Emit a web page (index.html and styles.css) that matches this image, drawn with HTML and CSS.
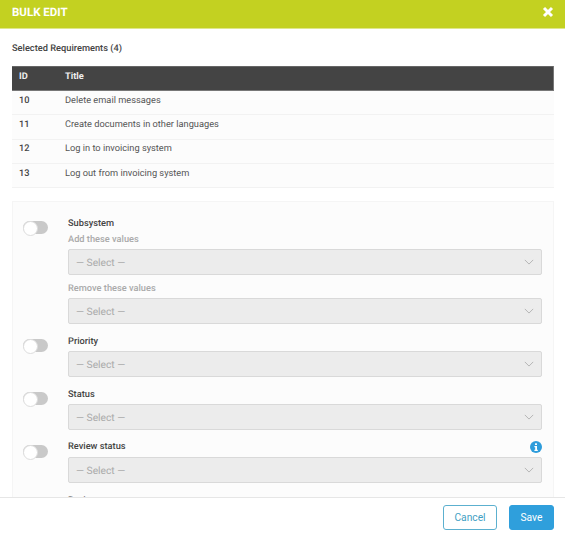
FILE: index.html
```html
<!DOCTYPE html>
<html lang="en">
<head>
<meta charset="utf-8">
<title>Bulk Edit</title>
<link rel="stylesheet" href="styles.css">
</head>
<body>
<div class="modal">
  <header class="modal-header">
    <h1 class="modal-title">BULK EDIT</h1>
    <svg class="close-icon" viewBox="0 0 12 12" aria-label="Close"><path d="M2 2l8 8M10 2l-8 8"/></svg>
  </header>
  <main class="modal-body">
    <h2 class="section-title">Selected Requirements (4)</h2>
    <table class="req-table">
      <thead><tr><th class="col-id">ID</th><th>Title</th></tr></thead>
      <tbody>
        <tr><td class="col-id">10</td><td>Delete email messages</td></tr>
        <tr><td class="col-id">11</td><td>Create documents in other languages</td></tr>
        <tr><td class="col-id">12</td><td>Log in to invoicing system</td></tr>
        <tr><td class="col-id">13</td><td>Log out from invoicing system</td></tr>
      </tbody>
    </table>
    <section class="panel">
      <div class="row">
        <span class="toggle"></span>
        <div class="field">
          <div class="label">Subsystem</div>
          <div class="sublabel">Add these values</div>
          <div class="select"><span>— Select —</span><svg class="chev" viewBox="0 0 12 7"><path d="M1 1l5 5 5-5"/></svg></div>
          <div class="sublabel second">Remove these values</div>
          <div class="select"><span>— Select —</span><svg class="chev" viewBox="0 0 12 7"><path d="M1 1l5 5 5-5"/></svg></div>
        </div>
      </div>
      <div class="row">
        <span class="toggle"></span>
        <div class="field">
          <div class="label">Priority</div>
          <div class="select"><span>— Select —</span><svg class="chev" viewBox="0 0 12 7"><path d="M1 1l5 5 5-5"/></svg></div>
        </div>
      </div>
      <div class="row">
        <span class="toggle"></span>
        <div class="field">
          <div class="label">Status</div>
          <div class="select"><span>— Select —</span><svg class="chev" viewBox="0 0 12 7"><path d="M1 1l5 5 5-5"/></svg></div>
        </div>
      </div>
      <div class="row">
        <span class="toggle"></span>
        <div class="field">
          <div class="label label-info">Review status
            <svg class="info" viewBox="0 0 12 12"><circle cx="6" cy="6" r="6"/><rect x="5" y="2.2" width="2" height="1.8" rx=".5"/><path d="M4.400 5h2.600v3.700h.8V10H4.400V8.700h.8V6.300h-.8z"/></svg>
          </div>
          <div class="select"><span>— Select —</span><svg class="chev" viewBox="0 0 12 7"><path d="M1 1l5 5 5-5"/></svg></div>
        </div>
      </div>
      <div class="row">
        <span class="toggle"></span>
        <div class="field">
          <div class="label">Reviewers</div>
        </div>
      </div>
    </section>
  </main>
  <footer class="modal-footer">
    <button class="btn btn-outline" type="button">Cancel</button>
    <button class="btn btn-primary" type="button">Save</button>
  </footer>
</div>
</body>
</html>
```
FILE: styles.css
```css
* { box-sizing: border-box; }
html, body { height: 100%; margin: 0; }
body { font-family: Roboto, "Liberation Sans", sans-serif; color: #444; background: #fff; overflow: hidden; text-rendering: geometricPrecision; }
.modal { display: flex; flex-direction: column; height: 533px; }
.modal-header {
  flex: none; height: 29px; padding: 0 11px 0 12px;
  display: flex; align-items: center; justify-content: space-between;
  background: #c3d121; border-bottom: 1px solid #dfe78a;
}
.modal-title { margin: 0 0 5px; font-size: 11.500px; line-height: 14px; font-weight: 700; color: #fff; }
.close-icon { width: 12px; height: 12px; margin-bottom: 4px; fill: none; stroke: #fff; stroke-width: 3; }
.modal-body { flex: 1; min-height: 0; overflow: hidden; padding: 14px 11px 0 12px; }
.section-title { margin: 0 0 12px; font-size: 9.250px; line-height: 12px; font-weight: 500; color: #444; height: 11px; }
.req-table { width: 100%; border-collapse: collapse; table-layout: fixed; font-size: 9.250px; margin-top: 12px; }
.req-table th {
  height: 24px; padding: 0 0 5px; text-align: left; font-weight: 700; color: #eee;
  background: #444; border-top: 1px solid #666; border-bottom: 1px solid #777;
}
.req-table th:last-child { border-right: 1px solid #777; }
.req-table td { height: 24.300px; padding: 0 0 5px; background: #fcfcfc; color: #555; border-bottom: 1px solid #f2f2f2; }
.req-table td.col-id { font-weight: 500; color: #444; }
.col-id { width: 53px; padding-left: 7px !important; }
.panel {
  margin-top: 13px; padding: 14px 11px 0 10px;
  background: #fcfcfc; border: 1px solid #f5f5f5; border-bottom: 0;
}
.row { display: flex; gap: 20px; margin-bottom: 10px; }
.toggle {
  flex: none; position: relative; width: 25px; height: 13px; margin-top: 5px;
  border-radius: 7px; background: #c9c9c9;
}
.toggle::before {
  content: ""; position: absolute; left: 0; top: 0; width: 13px; height: 13px;
  border-radius: 50%; background: #fff; border: 1px solid #ddd;
}
.field { flex: 1; min-width: 0; }
.label { height: 14px; margin-bottom: 3px; font-size: 9.250px; line-height: 16px; font-weight: 500; color: #444; }
.label-info { display: flex; justify-content: space-between; align-items: center; line-height: 14px; }
.info { width: 12px; height: 12px; fill: #fff; }
.info circle { fill: #2d9cdb; }
.sublabel { height: 14px; margin: -1px 0 3px; font-size: 9.250px; line-height: 16px; font-weight: 500; color: #aaa; }
.sublabel.second { margin-top: 6px; }
.select {
  height: 26px; padding: 0 7px 0 7px;
  display: flex; align-items: center; justify-content: space-between;
  background: #ececec; border: 1px solid #d9d9d9; border-radius: 2px;
  font-size: 10.250px; color: #aaa;
}
.chev { width: 10px; height: 6px; fill: none; stroke: #aaa; stroke-width: 1; }
.modal-footer {
  flex: none; height: 36px; padding: 7px 11px 4px 0;
  display: flex; justify-content: flex-end; gap: 12px;
  background: #fff; border-top: 1px solid #e6e6e6;
}
.btn { height: 25px; border-radius: 3px; font: 400 10.250px Roboto, "Liberation Sans", sans-serif; cursor: pointer; }
.btn-outline { width: 54px; background: #fff; border: 1px solid #5cb0cf; color: #3f9fc4; }
.btn-primary { width: 45px; background: #2f9fdc; border: 1px solid #2f9fdc; color: #fff; }
```
